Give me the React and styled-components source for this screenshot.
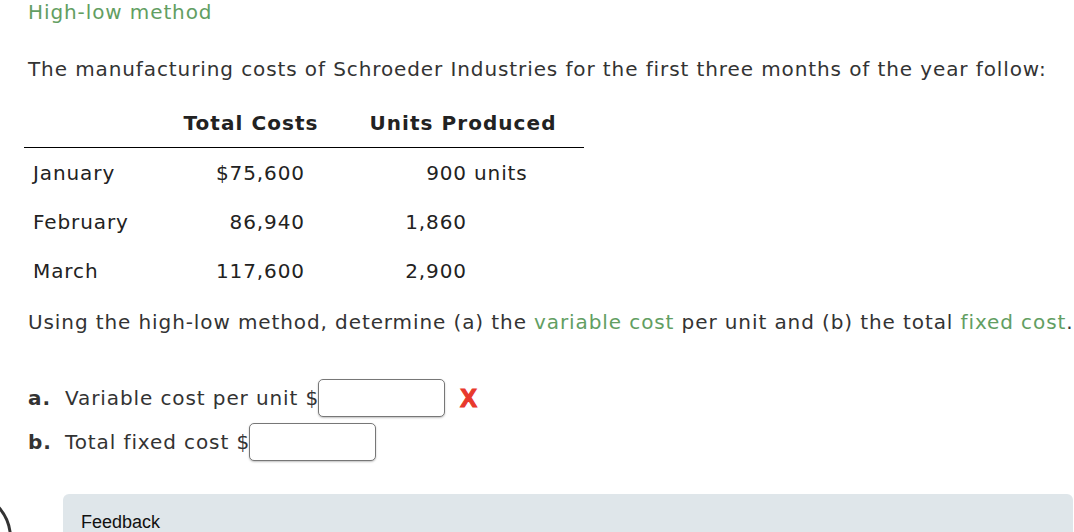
import styled, { createGlobalStyle } from "styled-components";

const rows = [
  { month: "January", cost: "$75,600", units: "900", suffix: "units" },
  { month: "February", cost: "86,940", units: "1,860" },
  { month: "March", cost: "117,600", units: "2,900" },
];

export default function App() {
  return (
    <>
      <GlobalStyle />
      <Page>
        <Title>High-low method</Title>
        <Intro>
          The manufacturing costs of Schroeder Industries for the first three
          months of the year follow:
        </Intro>
        <Table>
          <HeadCell />
          <HeadCell>Total Costs</HeadCell>
          <HeadCell span={2}>Units Produced</HeadCell>
          {rows.map((r) => (
            <Row key={r.month}>
              <MonthCell>{r.month}</MonthCell>
              <CostCell>{r.cost}</CostCell>
              <UnitsCell>{r.units}</UnitsCell>
              <SuffixCell>{r.suffix}</SuffixCell>
            </Row>
          ))}
        </Table>
        <Question>
          Using the high-low method, determine (a) the{" "}
          <Term>variable cost</Term> per unit and (b) the total{" "}
          <Term>fixed cost</Term>.
        </Question>
        <Answers>
          <AnswerRow>
            <Letter>a.</Letter>
            <span>Variable cost per unit $</span>
            <Field />
            <Wrong>X</Wrong>
          </AnswerRow>
          <AnswerRow>
            <Letter>b.</Letter>
            <span>Total fixed cost $</span>
            <Field />
          </AnswerRow>
        </Answers>
        <Feedback>Feedback</Feedback>
        <Ring />
      </Page>
    </>
  );
}

const GlobalStyle = createGlobalStyle`
  body {
    margin: 0;
    background: #fff;
    font-family: "DejaVu Sans", Verdana, sans-serif;
    color: #333;
    overflow: hidden;
  }
`;

const Page = styled.div`
  position: relative;
  height: 532px;
  padding-left: 28px;
  font-size: 20px;
  line-height: 24px;
  letter-spacing: 0.9px;
  overflow: hidden;
`;

const Title = styled.div`
  color: #629e62;
`;

const Intro = styled.p`
  margin: 33px 0 0;
`;

const Table = styled.div`
  display: grid;
  grid-template-columns: 136px 182px 125px 117px;
  width: 560px;
  margin: 18px 0 0 -4px;
  color: #222;
`;

const HeadCell = styled.div`
  grid-column: span ${(p) => p.span || 1};
  height: 48px;
  display: flex;
  align-items: center;
  justify-content: center;
  font-weight: bold;
  letter-spacing: 1.05px;
  border-bottom: 1px solid #000;
`;

const Row = styled.div`
  display: contents;
`;

const Cell = styled.div`
  height: 49px;
  display: flex;
  align-items: center;
`;

const MonthCell = styled(Cell)`
  padding-left: 9px;
`;

const CostCell = styled(Cell)`
  justify-content: flex-end;
  padding-right: 37px;
`;

const UnitsCell = styled(Cell)`
  justify-content: flex-end;
`;

const SuffixCell = styled(Cell)`
  padding-left: 7px;
`;

const Question = styled.p`
  margin: 15px 0 0;
`;

const Term = styled.span`
  color: #629e62;
`;

const Answers = styled.div`
  display: flex;
  flex-direction: column;
  gap: 6px;
  margin-top: 45px;
`;

const AnswerRow = styled.div`
  display: flex;
  align-items: center;
  height: 38px;
`;

const Letter = styled.b`
  width: 37px;
  color: #333;
`;

const Field = styled.input`
  box-sizing: border-box;
  width: 127px;
  height: 38px;
  margin-left: -1px;
  border: 1px solid #777;
  border-radius: 5px;
  box-shadow: 0 1px 2px rgba(0, 0, 0, 0.25);
  background: #fff;
`;

const Wrong = styled.span`
  margin-left: 15px;
  color: #e8392c;
  font-family: "Liberation Sans", Arial, sans-serif;
  font-size: 25px;
  font-weight: bold;
  letter-spacing: 0;
  -webkit-text-stroke: 1.2px #e8392c;
`;

const Feedback = styled.div`
  margin: 33px 0 0 35px;
  width: 1010px;
  height: 60px;
  box-sizing: border-box;
  padding: 18px 0 0 18px;
  background: #dfe6ea;
  border-radius: 6px;
  font-family: "Liberation Sans", Arial, sans-serif;
  font-size: 18px;
  line-height: 20px;
  letter-spacing: 0;
  color: #111;
`;

const Ring = styled.div`
  position: absolute;
  left: -85px;
  top: 490px;
  box-sizing: border-box;
  width: 97px;
  height: 97px;
  border: 3.5px solid #333;
  border-radius: 50%;
`;
